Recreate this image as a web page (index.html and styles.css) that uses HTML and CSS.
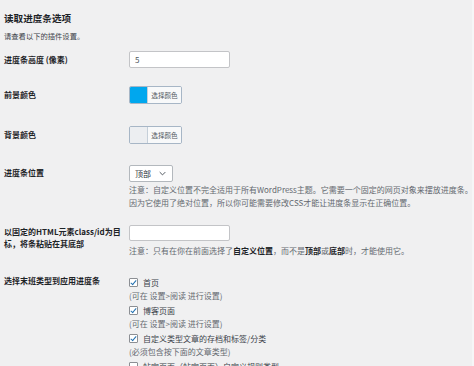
FILE: index.html
```html
<!DOCTYPE html>
<html lang="zh-CN">
<head>
<meta charset="utf-8">
<title>读取进度条选项</title>
<link rel="stylesheet" href="styles.css">
</head>
<body>
<div class="wrap">
  <h2 class="title">读取进度条选项</h2>
  <p class="intro">请查看以下的插件设置。</p>

  <div class="row row-height">
    <div class="label">进度条高度 (像素)</div>
    <div class="field"><input class="text-input" type="text" value="5"></div>
  </div>

  <div class="row row-fg">
    <div class="label">前景颜色</div>
    <div class="field">
      <button class="color-btn"><span class="swatch swatch-blue"></span><span class="color-text">选择颜色</span></button>
    </div>
  </div>

  <div class="row row-bg">
    <div class="label">背景颜色</div>
    <div class="field">
      <button class="color-btn"><span class="swatch swatch-light"></span><span class="color-text">选择颜色</span></button>
    </div>
  </div>

  <div class="row row-pos">
    <div class="label">进度条位置</div>
    <div class="field">
      <div class="select">顶部<svg class="chev" viewBox="0 0 10 6" width="7" height="5"><path d="M1 1l4 4 4-4" fill="none" stroke="#50575e" stroke-width="1.4"/></svg></div>
      <p class="note note-wide">注意：自定义位置不完全适用于所有WordPress主题。它需要一个固定的网页对象来摆放进度条。因为它使用了绝对位置，所以你可能需要修改CSS才能让进度条显示在正确位置。</p>
    </div>
  </div>

  <div class="row row-el">
    <div class="label label-two">以固定的HTML元素class/id为目标，将条粘贴在其底部</div>
    <div class="field">
      <input class="text-input text-empty" type="text" value="">
      <p class="note">注意：只有在你在前面选择了<b>自定义位置</b>，而不是<b>顶部</b>或<b>底部</b>时，才能使用它。</p>
    </div>
  </div>

  <div class="row row-types">
    <div class="label">选择末班类型到应用进度条</div>
    <div class="field">
      <div class="check"><span class="box on"></span>首页</div>
      <div class="sub">(可在 设置&gt;阅读 进行设置)</div>
      <div class="check"><span class="box on"></span>博客页面</div>
      <div class="sub">(可在 设置&gt;阅读 进行设置)</div>
      <div class="check"><span class="box on"></span>自定义类型文章的存档和标签/分类</div>
      <div class="sub">(必须包含按下面的文章类型)</div>
      <div class="check"><span class="box"></span>帖定页面（帖定页面）自定义规则类型</div>
    </div>
  </div>
</div>
</body>
</html>
```

FILE: styles.css
```css
html, body {
  margin: 0;
  padding: 0;
  background: #f0f0f1;
  overflow: hidden;
}
body {
  font-family: "Noto Sans CJK SC", "Noto Sans", sans-serif;
  color: #1d2327;
  width: 474px;
  height: 366px;
}
.wrap {
  padding: 11px 0 0 4px;
  border-right: 2px solid #f6f6f7;
  height: 100%;
  box-sizing: border-box;
}
.title {
  margin: 0;
  font-size: 9.6px;
  line-height: 14px;
  font-weight: 700;
}
.intro {
  margin: 6px 0 0;
  font-size: 7.3px;
  line-height: 10px;
  color: #3c434a;
}
.row {
  display: flex;
  align-items: flex-start;
}
.label {
  width: 125px;
  flex: none;
  font-size: 8px;
  line-height: 12px;
  font-weight: 700;
}
.field {
  flex: 1;
  min-width: 0;
}
.row-height { margin-top: 10px; }
.row-height .label { padding-top: 3px; }
.row-fg { margin-top: 18px; }
.row-fg .label { padding-top: 3px; }
.row-bg { margin-top: 22px; }
.row-bg .label { padding-top: 3px; }
.row-pos { margin-top: 21px; }
.row-pos .label { padding-top: 2px; }
.row-el { margin-top: 16px; }
.row-el .label { padding-top: 1px; }
.row-types { margin-top: 18px; }

.text-input {
  display: block;
  box-sizing: border-box;
  width: 101px;
  height: 17px;
  margin: 0;
  padding: 0 5px;
  border: 1px solid #c3c4c7;
  border-radius: 2px;
  background: #fff;
  font-family: inherit;
  font-size: 8px;
  color: #50575e;
  outline: none;
}
.text-empty { height: 16px; }
.color-btn {
  display: flex;
  align-items: stretch;
  box-sizing: border-box;
  width: 53px;
  height: 18px;
  margin: 0;
  padding: 0;
  border: 1px solid #a7b6c6;
  border-radius: 2px;
  background: #f6f7f7;
  overflow: hidden;
  font-family: inherit;
}
.swatch {
  width: 17px;
  flex: none;
  border-right: 1px solid #c5cfd9;
}
.swatch-blue { background: #00a7ee; }
.swatch-light { background: #eceef1; }
.color-text {
  flex: 1;
  display: flex;
  align-items: center;
  justify-content: center;
  font-size: 6.6px;
  color: #50575e;
  background: #f8f9fa;
}
.select {
  display: flex;
  align-items: center;
  justify-content: space-between;
  box-sizing: border-box;
  width: 44px;
  height: 17px;
  padding: 0 6px 0 5px;
  border: 1px solid #b3b8bd;
  border-radius: 2px;
  background: #fff;
  font-size: 8px;
  color: #2c3338;
}
.chev { display: block; }
.note {
  margin: 1px 0 0;
  font-size: 8px;
  line-height: 13px;
  color: #646970;
}
.note-wide { width: 346px; }
.note b { color: #1d2327; }
.row-el .note { margin-top: 3px; }
.check {
  display: flex;
  align-items: center;
  height: 14px;
  font-size: 8px;
  color: #3c434a;
}
.box {
  box-sizing: border-box;
  width: 9px;
  height: 9px;
  margin-right: 5px;
  border: 1px solid #8c8f94;
  border-radius: 1px;
  background: #fff;
  position: relative;
}
.box.on::after {
  content: "";
  position: absolute;
  left: 2px;
  top: 0;
  width: 2px;
  height: 5px;
  border: solid #2271b1;
  border-width: 0 1.5px 1.5px 0;
  transform: rotate(40deg);
}
.sub {
  height: 14px;
  line-height: 14px;
  font-size: 8px;
  color: #646970;
}
```
